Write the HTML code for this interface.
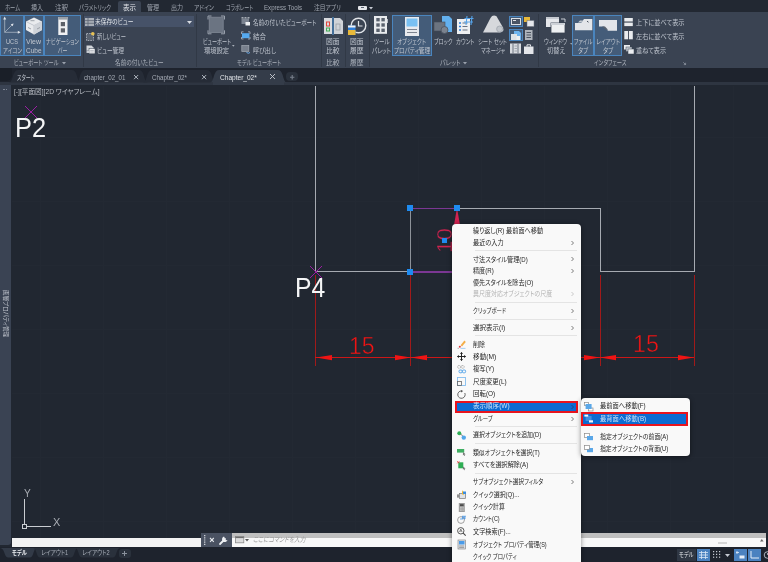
<!DOCTYPE html><html lang="ja"><head><meta charset="utf-8"><title>AutoCAD</title><style>
html,body{margin:0;padding:0;background:#212731;}
body{width:768px;height:562px;overflow:hidden;position:relative;font-family:"Liberation Sans","Noto Sans CJK JP",sans-serif;}
#root{filter:blur(0.4px);position:absolute;left:0;top:0;width:768px;height:562px;overflow:hidden;}
#root div{position:absolute;box-sizing:border-box;}
#root svg{position:absolute;overflow:visible;}
.t{position:absolute;white-space:nowrap;transform-origin:0 50%;line-height:1;font-feature-settings:"palt" 1;}
</style></head><body><div id="root">
<div style="left:0px;top:0px;width:768px;height:12.2px;background:#222832;"></div>
<div style="left:117.8px;top:0.6px;width:23.2px;height:12px;background:#3a4352;border-radius:2px 2px 0 0"></div>
<div style="left:0px;top:11.9px;width:768px;height:56.1px;background:#3a4352;"></div>
<div style="left:0px;top:68px;width:768px;height:15px;background:#1e232d;"></div>
<div style="left:0px;top:81.8px;width:768px;height:3.2px;background:#2e3541;"></div>
<div style="left:0px;top:85px;width:768px;height:462.5px;background:#212731;"></div>
<span class="t" id="t0" style="left:5px;top:3.50px;font-size:7px;color:#a0a6b0;transform:scaleX(0.7488);">ホーム</span>
<span class="t" id="t1" style="left:31px;top:3.50px;font-size:7px;color:#a0a6b0;transform:scaleX(0.8571);">挿入</span>
<span class="t" id="t2" style="left:55px;top:3.50px;font-size:7px;color:#a0a6b0;transform:scaleX(0.9286);">注釈</span>
<span class="t" id="t3" style="left:79px;top:3.50px;font-size:7px;color:#a0a6b0;transform:scaleX(0.7714);">パラメトリック</span>
<span class="t" id="t4" style="left:123px;top:3.50px;font-size:7px;color:#e4e7eb;transform:scaleX(0.9286);">表示</span>
<span class="t" id="t5" style="left:147px;top:3.50px;font-size:7px;color:#a0a6b0;transform:scaleX(0.8571);">管理</span>
<span class="t" id="t6" style="left:171px;top:3.50px;font-size:7px;color:#a0a6b0;transform:scaleX(0.8571);">出力</span>
<span class="t" id="t7" style="left:194px;top:3.50px;font-size:7px;color:#a0a6b0;transform:scaleX(0.8179);">アドイン</span>
<span class="t" id="t8" style="left:226px;top:3.50px;font-size:7px;color:#a0a6b0;transform:scaleX(0.7120);">コラボレート</span>
<span class="t" id="t9" style="left:264px;top:3.50px;font-size:7px;color:#a0a6b0;transform:scaleX(0.8745);">Express Tools</span>
<span class="t" id="t10" style="left:314px;top:3.50px;font-size:7px;color:#a0a6b0;transform:scaleX(0.8256);">注目アプリ</span>
<div style="left:357.5px;top:5.6px;width:9.5px;height:4px;background:#e4e6ea;border-radius:1px"></div>
<div style="left:360.7px;top:7px;width:3px;height:1.3px;background:#5a6270;"></div>
<svg style="left:368.7px;top:6.7px" width="4" height="3" viewBox="0 0 4 3"><path d="M0 0h4l-2 2.5z" fill="#c8ccd4"/></svg>
<div style="left:82.5px;top:14px;width:1px;height:53px;background:#313946;"></div>
<div style="left:196px;top:14px;width:1px;height:53px;background:#313946;"></div>
<div style="left:320.5px;top:14px;width:1px;height:53px;background:#313946;"></div>
<div style="left:345px;top:14px;width:1px;height:53px;background:#313946;"></div>
<div style="left:369px;top:14px;width:1px;height:53px;background:#313946;"></div>
<div style="left:538px;top:14px;width:1px;height:53px;background:#313946;"></div>
<div style="left:0px;top:15px;width:23.5px;height:40.5px;background:#445c79;border:1px solid #4a85be"></div>
<div style="left:24px;top:15px;width:19.5px;height:40.5px;background:#445c79;border:1px solid #4a85be"></div>
<div style="left:44px;top:15px;width:36.5px;height:40.5px;background:#445c79;border:1px solid #4a85be"></div>
<svg style="left:0px;top:14px" width="24" height="22" viewBox="0 0 24 22"><path d="M4.7 18.3V4M4.7 18.3H19.5M4.7 18.3L12.3 10.7" stroke="#aab5c3" stroke-width="0.8" fill="none"/><path d="M4.7 2.6l-1.5 2.8h3zM20.6 18.3l-2.8-1.5v3zM13.6 9.4l-2.9 0.9 2 2z" fill="#dfe4ea"/></svg>
<svg style="left:25px;top:17px" width="18" height="18" viewBox="0 0 18 18"><path d="M9 0.5L17 4.5V13L9 17.5L1 13V4.5z" fill="#e9ebee"/><path d="M1 4.5L9 8.5L17 4.5M9 8.5V17.5" stroke="#b9bec6" stroke-width="0.8" fill="none"/><path d="M9 8.5L17 4.5V13L9 17.5z" fill="#cfd3d9"/><path d="M5.5 3.7h4M3 10.5l3 1.5M12 12l3-1.5" stroke="#8a9099" stroke-width="0.8"/></svg>
<svg style="left:58.3px;top:16.8px" width="10" height="19" viewBox="0 0 10 19"><rect x="0.3" y="0" width="9.2" height="18" fill="#f0f1f3"/><rect x="0.3" y="0" width="9.2" height="2.6" fill="#9aa0a8"/><rect x="2.8" y="5" width="4.2" height="4.2" fill="#5c6169"/><rect x="2.8" y="11.3" width="4.2" height="4.2" fill="#5c6169"/></svg>
<span class="t" id="t11" style="left:6px;top:37.50px;font-size:7px;color:#bfc5ce;transform:scaleX(0.8118);">UCS</span>
<span class="t" id="t12" style="left:2.5px;top:46.50px;font-size:7px;color:#bfc5ce;transform:scaleX(0.7539);">アイコン</span>
<span class="t" id="t13" style="left:26px;top:37.50px;font-size:7px;color:#bfc5ce;transform:scaleX(0.9969);">View</span>
<span class="t" id="t14" style="left:26px;top:46.50px;font-size:7px;color:#bfc5ce;transform:scaleX(0.9262);">Cube</span>
<span class="t" id="t15" style="left:46px;top:37.50px;font-size:7px;color:#bfc5ce;transform:scaleX(0.7408);">ナビゲーション</span>
<span class="t" id="t16" style="left:57.5px;top:46.50px;font-size:7px;color:#bfc5ce;transform:scaleX(0.7029);">バー</span>
<span class="t" id="t17" style="left:14px;top:59.40px;font-size:7px;color:#aab0ba;transform:scaleX(0.7405);">ビューポート ツール</span>
<svg style="left:62px;top:62px" width="4" height="2.5" viewBox="0 0 4 2.5"><path d="M0 0h4l-2 2.5z" fill="#9aa1ac"/></svg>
<div style="left:84px;top:16px;width:109.5px;height:11.3px;background:#465268;"></div>
<svg style="left:85px;top:18px" width="9" height="8" viewBox="0 0 9 8"><rect x="0" y="0" width="9" height="8" fill="#a9afb8"/><path d="M0 2.6h9M0 5.3h9M3 0v8" stroke="#5c6573" stroke-width="0.8"/></svg>
<span class="t" id="t18" style="left:94.5px;top:18.10px;font-size:7px;color:#dfe3e8;transform:scaleX(0.8194);">未保存のビュー</span>
<svg style="left:187px;top:21px" width="5" height="3" viewBox="0 0 5 3"><path d="M0 0h5l-2.5 3z" fill="#d8dce2"/></svg>
<svg style="left:85.5px;top:31px" width="9" height="10" viewBox="0 0 9 10"><rect x="0.5" y="2.5" width="7" height="7" fill="#59626f" stroke="#aab0ba" stroke-width="0.9" stroke-dasharray="1.6 1"/><circle cx="6.8" cy="2.8" r="1.8" fill="#e8c255"/></svg>
<span class="t" id="t19" style="left:97px;top:32.60px;font-size:7px;color:#bfc5ce;transform:scaleX(0.7481);">新しいビュー</span>
<svg style="left:85.5px;top:45px" width="9" height="10" viewBox="0 0 9 10"><path d="M0.5 0.5h5l2 2v3h-7z" fill="#d2d6db"/><rect x="3" y="3.6" width="6" height="5.2" fill="#eef0f2" stroke="#3a4352" stroke-width="0.5"/><path d="M0.5 5.5h2.5v2.5h-2.5z" fill="#c5c9cf"/><path d="M4.2 5.5h3.6M4.2 7h3.6" stroke="#9aa0a9" stroke-width="0.6"/></svg>
<span class="t" id="t20" style="left:97px;top:46.50px;font-size:7px;color:#bfc5ce;transform:scaleX(0.8124);">ビュー管理</span>
<span class="t" id="t21" style="left:115px;top:59.40px;font-size:7px;color:#aab0ba;transform:scaleX(0.8048);">名前の付いたビュー</span>
<svg style="left:208px;top:16px" width="16.5" height="18" viewBox="0 0 16.5 18"><rect x="1.2" y="1.2" width="14" height="15.4" fill="#6b7482" stroke="#7f8794" stroke-width="0.8"/><path d="M0 3.5V0h3.5M13 0h3.5v3.5M16.5 14.3v3.5H13M3.5 17.8H0v-3.5" stroke="#9aa2ae" stroke-width="1" fill="none"/></svg>
<span class="t" id="t22" style="left:203px;top:37.50px;font-size:7px;color:#bfc5ce;transform:scaleX(0.7317);">ビューポート</span>
<span class="t" id="t23" style="left:204px;top:46.50px;font-size:7px;color:#bfc5ce;transform:scaleX(0.8929);">環境設定</span>
<svg style="left:232px;top:45px" width="2.6" height="1.8" viewBox="0 0 2.6 1.8"><path d="M0 0h2.6l-1.3 1.8z" fill="#aab0ba"/></svg>
<svg style="left:240.5px;top:17px" width="10" height="10" viewBox="0 0 10 10"><rect x="0.5" y="1.5" width="7.5" height="5.5" fill="#7b8390"/><path d="M0.5 0.8h8" stroke="#d5d9de" stroke-width="1" stroke-dasharray="2 1"/><rect x="4.5" y="5" width="4.5" height="3.5" fill="#eef0f2"/></svg>
<span class="t" id="t24" style="left:253px;top:18.60px;font-size:7px;color:#bfc5ce;transform:scaleX(0.8008);">名前の付いたビューポート</span>
<svg style="left:240.5px;top:31px" width="10" height="10" viewBox="0 0 10 10"><rect x="1" y="2.2" width="7.5" height="5" fill="#56a9ee"/><path d="M0.5 3V0.8h2M7 0.8h2V3M9 6v2H7M2.5 8H0.5V6" stroke="#aeb5bf" stroke-width="0.8" fill="none"/></svg>
<span class="t" id="t25" style="left:253px;top:32.60px;font-size:7px;color:#bfc5ce;transform:scaleX(0.9286);">結合</span>
<svg style="left:240.5px;top:45px" width="10" height="10" viewBox="0 0 10 10"><rect x="0.8" y="0.5" width="7" height="6" fill="#78808d" stroke="#a3aab4" stroke-width="0.7"/><path d="M5.5 7.5q2 1.5 3.5 0" stroke="#6fb0ee" stroke-width="1" fill="none"/></svg>
<span class="t" id="t26" style="left:253px;top:46.50px;font-size:7px;color:#bfc5ce;transform:scaleX(0.8623);">呼び出し</span>
<span class="t" id="t27" style="left:237px;top:59.40px;font-size:7px;color:#aab0ba;transform:scaleX(0.7337);">モデル ビューポート</span>
<svg style="left:324px;top:17px" width="19" height="18" viewBox="0 0 19 18"><path d="M0 1h8v16H0z" fill="#d9dbdf"/><path d="M10 1h6l3 3v13h-9z" fill="#d0d3d8"/><path d="M9 0v18" stroke="#4f9be0" stroke-width="1"/><rect x="2.5" y="5" width="3" height="4" fill="none" stroke="#e0453a" stroke-width="1"/><rect x="2.5" y="11" width="3" height="3" fill="none" stroke="#3fae52" stroke-width="1"/><rect x="12" y="7" width="4" height="6" fill="none" stroke="#9aa0a8" stroke-width="0.8"/></svg>
<span class="t" id="t28" style="left:326px;top:37.50px;font-size:7px;color:#bfc5ce;transform:scaleX(0.9643);">図面</span>
<span class="t" id="t29" style="left:326px;top:46.50px;font-size:7px;color:#bfc5ce;transform:scaleX(0.9643);">比較</span>
<span class="t" id="t30" style="left:326px;top:59.40px;font-size:7px;color:#aab0ba;transform:scaleX(0.9643);">比較</span>
<svg style="left:348px;top:16.5px" width="19" height="19" viewBox="0 0 19 19"><circle cx="10.5" cy="8.5" r="7.3" fill="none" stroke="#e1e4e8" stroke-width="1.4"/><path d="M10.5 4v5h4" stroke="#e1e4e8" stroke-width="1.2" fill="none"/><rect x="0" y="8.5" width="7.5" height="9.5" fill="#2f7ed8"/><rect x="0" y="13" width="7.5" height="5" fill="#e9b93a"/><rect x="0" y="8.5" width="7.5" height="2" fill="#f0f2f4"/></svg>
<span class="t" id="t31" style="left:350px;top:37.50px;font-size:7px;color:#bfc5ce;transform:scaleX(0.9643);">図面</span>
<span class="t" id="t32" style="left:350px;top:46.50px;font-size:7px;color:#bfc5ce;transform:scaleX(0.9643);">履歴</span>
<span class="t" id="t33" style="left:350px;top:59.40px;font-size:7px;color:#aab0ba;transform:scaleX(0.9643);">履歴</span>
<svg style="left:374px;top:16px" width="14" height="18" viewBox="0 0 14 18"><rect x="0" y="0" width="13" height="17.8" fill="#e9ebee"/><rect x="13" y="3" width="1" height="4" fill="#b9bec6"/><g fill="#5a626e"><rect x="2.3" y="2" width="3.4" height="3.4"/><rect x="7.4" y="2" width="3.4" height="3.4"/><rect x="2.3" y="7.3" width="3.4" height="3.4"/><rect x="7.4" y="7.3" width="3.4" height="3.4"/><rect x="2.3" y="12.6" width="3.4" height="3.4"/><rect x="7.4" y="12.6" width="3.4" height="3.4"/></g></svg>
<span class="t" id="t34" style="left:374px;top:37.50px;font-size:7px;color:#bfc5ce;transform:scaleX(0.7793);">ツール</span>
<span class="t" id="t35" style="left:372px;top:46.50px;font-size:7px;color:#bfc5ce;transform:scaleX(0.8026);">パレット</span>
<div style="left:392px;top:14.5px;width:39.5px;height:41px;background:#445c79;border:1px solid #4a85be"></div>
<svg style="left:405px;top:16.5px" width="14" height="19" viewBox="0 0 14 19"><rect x="0" y="0" width="14" height="19" fill="#e8eaee"/><rect x="1.5" y="1.5" width="11" height="8" fill="#79c0f2"/><path d="M2 12.5h10M2 15.5h10" stroke="#7d848f" stroke-width="1"/></svg>
<span class="t" id="t36" style="left:397px;top:37.50px;font-size:7px;color:#bfc5ce;transform:scaleX(0.7871);">オブジェクト</span>
<span class="t" id="t37" style="left:394px;top:46.50px;font-size:7px;color:#bfc5ce;transform:scaleX(0.7964);">プロパティ管理</span>
<svg style="left:434px;top:16px" width="19" height="19" viewBox="0 0 19 19"><path d="M8 0h7l3 3v13H8z" fill="#63b0ee"/><rect x="0" y="6" width="11" height="9" fill="#6c7480" stroke="#444c58" stroke-width="0.6"/><circle cx="10.5" cy="14" r="3.5" fill="#7b838f" stroke="#4a525e" stroke-width="0.8"/></svg>
<span class="t" id="t38" style="left:434px;top:37.50px;font-size:7px;color:#bfc5ce;transform:scaleX(0.7470);">ブロック</span>
<svg style="left:457px;top:16px" width="18" height="19" viewBox="0 0 18 19"><rect x="0" y="3" width="13" height="15" fill="#eef0f2"/><path d="M2 7h2M2 10.5h2M2 14h2" stroke="#2f7ed8" stroke-width="1.5"/><path d="M5.5 7h5M5.5 10.5h5M5.5 14h5" stroke="#6b7380" stroke-width="1.2"/><path d="M10 0l-1 9M15 0l-1 9M7.5 2.5h9M7 6h9" stroke="#56a4ea" stroke-width="1.1"/></svg>
<span class="t" id="t39" style="left:456px;top:37.50px;font-size:7px;color:#bfc5ce;transform:scaleX(0.7580);">カウント</span>
<svg style="left:483.3px;top:15.3px" width="21" height="18" viewBox="0 0 21 18"><path d="M0 17.5L7.5 3Q9.5 -0.6 13.5 1.2L20 12.5Q21.5 17 17 17.5z" fill="#d6d8dc"/><circle cx="16.6" cy="14" r="3" fill="#c2c6cc" stroke="#9aa0a9" stroke-width="0.7"/></svg>
<span class="t" id="t40" style="left:478px;top:37.50px;font-size:7px;color:#bfc5ce;transform:scaleX(0.7576);">シート セット</span>
<span class="t" id="t41" style="left:481px;top:46.50px;font-size:7px;color:#bfc5ce;transform:scaleX(0.7511);">マネージャ</span>
<div style="left:509px;top:15.5px;width:13.5px;height:11.5px;background:#445c79;border:1px solid #4a85be"></div>
<div style="left:511px;top:18px;width:9.5px;height:6.5px;background:#4a5464;border:0.8px solid #dfe2e6"></div>
<div style="left:512.5px;top:20.2px;width:3px;height:0.8px;background:#dfe2e6;"></div>
<div style="left:509px;top:29px;width:13.5px;height:12px;background:#445c79;border:1px solid #4a85be"></div>
<svg style="left:511px;top:31px" width="10" height="9" viewBox="0 0 10 9"><path d="M3 0h5l2 2v7H3z" fill="#6fb4ee"/><rect x="0" y="3" width="6" height="6" fill="#dfe2e6"/><rect x="5.5" y="5" width="3.5" height="4" fill="#eef0f2"/></svg>
<svg style="left:510px;top:43px" width="12" height="11" viewBox="0 0 12 11"><rect x="0" y="0.5" width="11" height="10" fill="#d9dce1"/><path d="M3 0.5v10M8 0.5v10" stroke="#6a727e" stroke-width="1"/><path d="M4.5 3h2.5M4.5 5.5h2.5M4.5 8h2.5" stroke="#8a919c" stroke-width="0.7"/></svg>
<svg style="left:524px;top:16.5px" width="10" height="10" viewBox="0 0 10 10"><rect x="0" y="0" width="6" height="5" fill="#e9b93a"/><rect x="3" y="3.5" width="7" height="6" fill="#e6e8ec" stroke="#6a727e" stroke-width="0.5"/></svg>
<svg style="left:525px;top:30px" width="8" height="10" viewBox="0 0 8 10"><rect x="0" y="0" width="7.5" height="10" fill="#aeb4bc"/><path d="M1.5 2.5h4.5M1.5 5h4.5M1.5 7.5h4.5" stroke="#4f5763" stroke-width="1"/></svg>
<svg style="left:524px;top:44px" width="10" height="10" viewBox="0 0 10 10"><rect x="0" y="2.5" width="9.5" height="7.5" fill="#e4e6ea"/><path d="M3 2.5V0.8h3.5v1.7" stroke="#e4e6ea" stroke-width="1" fill="none"/></svg>
<span class="t" id="t42" style="left:440px;top:59.40px;font-size:7px;color:#aab0ba;transform:scaleX(0.8660);">パレット</span>
<svg style="left:462.8px;top:62px" width="4" height="2.5" viewBox="0 0 4 2.5"><path d="M0 0h4l-2 2.5z" fill="#9aa1ac"/></svg>
<svg style="left:546px;top:17px" width="20" height="17" viewBox="0 0 20 17"><rect x="0" y="0" width="13" height="10" fill="#e6e8ec"/><rect x="0" y="0" width="13" height="2" fill="#c6cad1"/><rect x="5" y="6" width="14" height="10" fill="#eef0f2" stroke="#3a4352" stroke-width="0.8"/><rect x="5" y="6" width="14" height="2" fill="#cdd1d7"/><path d="M15 2h4v3" stroke="#d8dce2" stroke-width="0.9" fill="none"/></svg>
<span class="t" id="t43" style="left:544px;top:37.50px;font-size:7px;color:#bfc5ce;transform:scaleX(0.7723);">ウィンドウ</span>
<span class="t" id="t44" style="left:547px;top:46.50px;font-size:7px;color:#bfc5ce;transform:scaleX(0.8848);">切替え</span>
<svg style="left:569.5px;top:43px" width="2.6" height="1.8" viewBox="0 0 2.6 1.8"><path d="M0 0h2.6l-1.3 1.8z" fill="#9aa1ac"/></svg>
<div style="left:572px;top:14.5px;width:21.5px;height:41px;background:#445c79;border:1px solid #4a85be"></div>
<div style="left:594px;top:14.5px;width:27.5px;height:41px;background:#445c79;border:1px solid #4a85be"></div>
<svg style="left:574.5px;top:19px" width="18" height="12" viewBox="0 0 18 12"><path d="M0 4L6 4L9 0H17.3V11.3H0z" fill="#e3e5e9"/><path d="M3 3.6l2-2h3l-2 2z" fill="#c9cdd3"/><path d="M12 2.2l1.5 1" stroke="#4b535f" stroke-width="1"/></svg>
<svg style="left:599px;top:19.5px" width="18" height="12" viewBox="0 0 18 12"><path d="M0 0h18v10.8H9L5 6.5H0z" fill="#e3e5e9"/><path d="M3 6.5h3l3 3.3H7z" fill="#59616d"/></svg>
<span class="t" id="t45" style="left:573.5px;top:37.50px;font-size:7px;color:#bfc5ce;transform:scaleX(0.7629);">ファイル</span>
<span class="t" id="t46" style="left:578px;top:46.50px;font-size:7px;color:#bfc5ce;transform:scaleX(0.8163);">タブ</span>
<span class="t" id="t47" style="left:596px;top:37.50px;font-size:7px;color:#bfc5ce;transform:scaleX(0.7853);">レイアウト</span>
<span class="t" id="t48" style="left:603px;top:46.50px;font-size:7px;color:#bfc5ce;transform:scaleX(0.8163);">タブ</span>
<svg style="left:624px;top:17.5px" width="10" height="9" viewBox="0 0 10 9"><rect x="0.3" y="0" width="8.5" height="3.5" fill="#e9ebee"/><rect x="0.3" y="4.6" width="8.5" height="3.5" fill="#e9ebee"/></svg>
<span class="t" id="t49" style="left:636px;top:18.60px;font-size:7px;color:#bfc5ce;transform:scaleX(0.8811);">上下に並べて表示</span>
<svg style="left:624px;top:31px" width="10" height="9" viewBox="0 0 10 9"><rect x="0.3" y="0" width="3.8" height="8.3" fill="#e9ebee"/><rect x="5" y="0" width="3.8" height="8.3" fill="#e9ebee"/></svg>
<span class="t" id="t50" style="left:636px;top:32.60px;font-size:7px;color:#bfc5ce;transform:scaleX(0.8811);">左右に並べて表示</span>
<svg style="left:624px;top:45px" width="10" height="9" viewBox="0 0 10 9"><rect x="0" y="0" width="6" height="4.5" fill="#eceef1"/><rect x="2" y="2" width="6" height="4.5" fill="#c9cdd4" stroke="#3a4352" stroke-width="0.5"/><rect x="4" y="4" width="6" height="5" fill="#eceef1" stroke="#3a4352" stroke-width="0.5"/></svg>
<span class="t" id="t51" style="left:636px;top:46.50px;font-size:7px;color:#bfc5ce;transform:scaleX(0.8700);">重ねて表示</span>
<span class="t" id="t52" style="left:594px;top:59.40px;font-size:7px;color:#aab0ba;transform:scaleX(0.7572);">インタフェース</span>
<svg style="left:683.3px;top:61.7px" width="3" height="3" viewBox="0 0 3 3"><path d="M0.3 0.3L2.6 2.6M2.6 0.8v1.8H0.8" stroke="#9aa1ac" stroke-width="0.7" fill="none"/></svg>
<div style="left:0px;top:68px;width:11.5px;height:13px;background:#1a1f28;border-radius:0 0 6px 0"></div>
<svg style="left:9px;top:69.9px" width="72" height="12.5" viewBox="0 0 72 12.5"><path d="M0 12.5C4.5 12.5 3 0 9 0H63C69 0 67.5 12.5 72 12.5z" fill="#262c37"/></svg>
<svg style="left:76px;top:69.9px" width="72" height="12.5" viewBox="0 0 72 12.5"><path d="M0 12.5C4.5 12.5 3 0 9 0H63C69 0 67.5 12.5 72 12.5z" fill="#262c37"/></svg>
<svg style="left:143px;top:69.9px" width="73" height="12.5" viewBox="0 0 73 12.5"><path d="M0 12.5C4.5 12.5 3 0 9 0H64C70 0 68.5 12.5 73 12.5z" fill="#262c37"/></svg>
<svg style="left:210px;top:69.9px" width="77" height="12.5" viewBox="0 0 77 12.5"><path d="M0 12.5C4.5 12.5 3 0 9 0H68C74 0 72.5 12.5 77 12.5z" fill="#343c49"/></svg>
<div style="left:213px;top:82px;width:71px;height:3px;background:#343c49;"></div>
<span class="t" id="t53" style="left:17px;top:73.50px;font-size:7px;color:#bcc2cb;transform:scaleX(0.7084);">スタート</span>
<span class="t" id="t54" style="left:84px;top:73.50px;font-size:7px;color:#a6acb6;transform:scaleX(0.8883);">chapter_02_01</span>
<span class="t" id="t55" style="left:152px;top:73.50px;font-size:7px;color:#a6acb6;transform:scaleX(0.8903);">Chapter_02*</span>
<span class="t" id="t56" style="left:219.5px;top:73.50px;font-size:7px;color:#e2e5e9;transform:scaleX(0.9361);">Chapter_02*</span>
<svg style="left:134.4px;top:74.5px" width="4.2" height="4.2" viewBox="0 0 4.2 4.2"><path d="M0 0L4.2 4.2M4.2 0L0 4.2" stroke="#b9bfc8" stroke-width="0.9"/></svg>
<svg style="left:202.4px;top:74.5px" width="4.2" height="4.2" viewBox="0 0 4.2 4.2"><path d="M0 0L4.2 4.2M4.2 0L0 4.2" stroke="#b9bfc8" stroke-width="0.9"/></svg>
<svg style="left:270.1px;top:74.0px" width="5.0" height="5.0" viewBox="0 0 5.0 5.0"><path d="M0 0L5.0 5.0M5.0 0L0 5.0" stroke="#c8ccd3" stroke-width="0.9"/></svg>
<div style="left:286px;top:72.3px;width:11.5px;height:9px;background:#2a313c;border-radius:4px"></div>
<svg style="left:289.6px;top:74.6px" width="4.4" height="4.4" viewBox="0 0 4.4 4.4"><path d="M2.2 0v4.4M0 2.2h4.4" stroke="#7a818d" stroke-width="1.1"/></svg>
<div style="left:39.5px;top:85.5px;width:1px;height:452px;background:#232933;"></div>
<div style="left:102.5px;top:85.5px;width:1px;height:452px;background:#232933;"></div>
<div style="left:165.5px;top:85.5px;width:1px;height:452px;background:#232933;"></div>
<div style="left:228.5px;top:85.5px;width:1px;height:452px;background:#232933;"></div>
<div style="left:291.5px;top:85.5px;width:1px;height:452px;background:#232933;"></div>
<div style="left:354.5px;top:85.5px;width:1px;height:452px;background:#232933;"></div>
<div style="left:418px;top:85.5px;width:1px;height:452px;background:#232933;"></div>
<div style="left:481px;top:85.5px;width:1px;height:452px;background:#232933;"></div>
<div style="left:544px;top:85.5px;width:1px;height:452px;background:#232933;"></div>
<div style="left:607px;top:85.5px;width:1px;height:452px;background:#232933;"></div>
<div style="left:670px;top:85.5px;width:1px;height:452px;background:#232933;"></div>
<div style="left:733px;top:85.5px;width:1px;height:452px;background:#232933;"></div>
<div style="left:12px;top:137px;width:756px;height:1px;background:#232933;"></div>
<div style="left:12px;top:201px;width:756px;height:1px;background:#232933;"></div>
<div style="left:12px;top:265px;width:756px;height:1px;background:#232933;"></div>
<div style="left:12px;top:329px;width:756px;height:1px;background:#232933;"></div>
<div style="left:12px;top:393px;width:756px;height:1px;background:#232933;"></div>
<div style="left:12px;top:457px;width:756px;height:1px;background:#232933;"></div>
<div style="left:12px;top:521px;width:756px;height:1px;background:#232933;"></div>
<div style="left:0px;top:85px;width:11.3px;height:460px;background:#3a4353;border-radius:0 0 3px 0"></div>
<div style="left:3px;top:88.5px;width:1.5px;height:1px;background:#7e8694;"></div>
<div style="left:5.5px;top:88.5px;width:1.5px;height:1px;background:#7e8694;"></div>
<span class="t" style="left:8.6px;top:290px;font-size:6px;color:#c0c5cd;transform-origin:0 0;transform:rotate(90deg) scaleX(0.93);line-height:1;" >画層プロパティ管理</span>
<span class="t" id="t57" style="left:13.5px;top:88.90px;font-size:6.6px;color:#bbbfc6;transform:scaleX(1.0094);">[-][平面図][2D ワイヤフレーム]</span>
<div style="left:315px;top:85.5px;width:1px;height:186.5px;background:#a6aab1;"></div>
<div style="left:315px;top:271.2px;width:96px;height:1.2px;background:#a6aab1;"></div>
<div style="left:410px;top:208px;width:1px;height:64px;background:#8d9299;"></div>
<div style="left:457px;top:207.6px;width:143px;height:1.2px;background:#a6aab1;"></div>
<div style="left:599.5px;top:208px;width:1px;height:64px;background:#a6aab1;"></div>
<div style="left:599.5px;top:271.2px;width:95px;height:1.2px;background:#a6aab1;"></div>
<div style="left:693.8px;top:85.5px;width:1px;height:186.5px;background:#a6aab1;"></div>
<div style="left:410px;top:207.5px;width:47px;height:1.4px;background:#7b3793;"></div>
<div style="left:410px;top:271.2px;width:50px;height:1.4px;background:#7b3793;"></div>
<div style="left:315px;top:275px;width:1px;height:91px;background:#a01a1a;"></div>
<div style="left:409.8px;top:275px;width:1px;height:91px;background:#a01a1a;"></div>
<div style="left:599.5px;top:275px;width:1px;height:90.5px;background:#a01a1a;"></div>
<div style="left:694px;top:275px;width:1px;height:90.5px;background:#a01a1a;"></div>
<div style="left:315px;top:357.2px;width:96px;height:1px;background:#cc1717;"></div>
<div style="left:411px;top:357.2px;width:45px;height:1px;background:#cc1717;"></div>
<div style="left:581px;top:357px;width:113px;height:1px;background:#cc1717;"></div>
<svg style="left:315.5px;top:355.09999999999997px" width="16" height="5.2" viewBox="0 0 16 5.2"><path d="M0 2.6L16 0V5.2z" fill="#f01414"/></svg>
<svg style="left:394.5px;top:355.09999999999997px" width="16" height="5.2" viewBox="0 0 16 5.2"><path d="M16 2.6L0 0V5.2z" fill="#f01414"/></svg>
<svg style="left:411px;top:355.09999999999997px" width="16" height="5.2" viewBox="0 0 16 5.2"><path d="M0 2.6L16 0V5.2z" fill="#f01414"/></svg>
<svg style="left:583.5px;top:354.9px" width="16" height="5.2" viewBox="0 0 16 5.2"><path d="M16 2.6L0 0V5.2z" fill="#f01414"/></svg>
<svg style="left:600px;top:354.9px" width="16" height="5.2" viewBox="0 0 16 5.2"><path d="M0 2.6L16 0V5.2z" fill="#f01414"/></svg>
<svg style="left:678px;top:354.9px" width="16" height="5.2" viewBox="0 0 16 5.2"><path d="M16 2.6L0 0V5.2z" fill="#f01414"/></svg>
<span class="t" id="t58" style="left:348.6px;top:334.85px;font-size:23.5px;color:#f01414;transform:scaleX(0.9793);-webkit-text-stroke:0.45px #212731;">15</span>
<span class="t" id="t59" style="left:633px;top:333.25px;font-size:23.5px;color:#f01414;transform:scaleX(0.9908);-webkit-text-stroke:0.45px #212731;">15</span>
<svg style="left:453.5px;top:208px" width="6" height="17" viewBox="0 0 6 17"><path d="M3 0L6 17H0z" fill="#cf2350"/></svg>
<div style="left:456.5px;top:224px;width:1px;height:40px;background:#cf2350;"></div>
<span class="t" style="left:434.3px;top:252.8px;font-size:22.3px;color:#cf2350;-webkit-text-stroke:0.45px #212731;transform-origin:0 0;transform:rotate(-90deg);line-height:1;">10</span>
<div style="left:407.3px;top:205.0px;width:6px;height:6px;background:#1e8bf0;"></div>
<div style="left:454.0px;top:205.0px;width:6px;height:6px;background:#1e8bf0;"></div>
<div style="left:407.3px;top:268.7px;width:6px;height:6px;background:#1e8bf0;"></div>
<div style="left:442.0px;top:237.5px;width:5px;height:5px;background:#1e8bf0;"></div>
<svg style="left:25px;top:105.5px" width="12" height="12" viewBox="0 0 12 12"><path d="M0 0L12 12M12 0L0 12" stroke="#9a1ea2" stroke-width="1"/></svg>
<svg style="left:309.5px;top:265.5px" width="12" height="12" viewBox="0 0 12 12"><path d="M0 0L12 12M12 0L0 12" stroke="#9a1ea2" stroke-width="1"/></svg>
<span class="t" id="t60" style="left:15.2px;top:114.40px;font-size:28px;color:#f4f5f6;transform:scaleX(0.9080);">P2</span>
<span class="t" id="t61" style="left:295px;top:273.80px;font-size:28px;color:#f4f5f6;transform:scaleX(0.8818);">P4</span>
<div style="left:23.5px;top:499px;width:1px;height:25px;background:#c9ccd1;"></div>
<div style="left:26.5px;top:526.2px;width:24.5px;height:1px;background:#c9ccd1;"></div>
<div style="left:21.5px;top:524px;width:5px;height:5px;background:transparent;border:1px solid #c9ccd1"></div>
<span class="t" id="t62" style="left:24.2px;top:487.55px;font-size:10.5px;color:#a9adb4;transform:scaleX(0.9693);">Y</span>
<span class="t" id="t63" style="left:52.7px;top:517.35px;font-size:10.5px;color:#a9adb4;transform:scaleX(1.0405);">X</span>
<div style="left:12px;top:537.8px;width:754.2px;height:9.5px;background:#f3f3f3;"></div>
<div style="left:0px;top:547.3px;width:768px;height:14.7px;background:#1e232d;"></div>
<div style="left:201.3px;top:532.8px;width:31px;height:14.5px;background:#4a5262;"></div>
<div style="left:232.3px;top:532.8px;width:533.9px;height:5.2px;background:#bfbfbf;"></div>
<div style="left:232.3px;top:537.8px;width:533.9px;height:9.5px;background:#f8f8f8;"></div>
<svg style="left:204.3px;top:535px" width="1.4" height="10" viewBox="0 0 1.4 10"><path d="M0.7 0v10" stroke="#d5d9df" stroke-width="1.3" stroke-dasharray="1.2 1"/></svg>
<svg style="left:209.6px;top:538.1px" width="3.8" height="3.8" viewBox="0 0 3.8 3.8"><path d="M0 0L3.8 3.8M3.8 0L0 3.8" stroke="#e4e7eb" stroke-width="1.1"/></svg>
<svg style="left:219px;top:535px" width="10" height="10" viewBox="0 0 10 10"><path d="M1 9L6 4" stroke="#eef0f3" stroke-width="1.8" stroke-linecap="round"/><path d="M5 1.5a2.8 2.8 0 1 0 3.5 3.5L7 5.2 5.8 4 5.6 2.6z" fill="#eef0f3"/></svg>
<svg style="left:235px;top:536px" width="10" height="7" viewBox="0 0 10 7"><rect x="0.4" y="0.4" width="8.4" height="6.4" fill="#dcdcdc" stroke="#8a8a8a" stroke-width="0.8"/><path d="M0.4 1.4h8.4" stroke="#6e6e6e" stroke-width="1.4"/></svg>
<svg style="left:245px;top:539px" width="4" height="3" viewBox="0 0 4 3"><path d="M0 0h4l-2 2.5z" fill="#555"/></svg>
<span class="t" id="t64" style="left:253px;top:536.10px;font-size:7px;color:#9b9b9b;transform:scaleX(0.8203);font-style:italic;">ここにコマンドを入力</span>
<div style="left:718.3px;top:541.7px;width:9px;height:1.9px;background:#d6d6d6;"></div>
<svg style="left:759.7px;top:539px" width="3.6" height="2.6" viewBox="0 0 3.6 2.6"><path d="M0 2.6h3.6l-1.8-2.6z" fill="#666"/></svg>
<svg style="left:0px;top:548px" width="40" height="10" viewBox="0 0 40 10"><path d="M0 0C5 0 4 9.5 8 9.5H30C34 9.5 33 0 37 0z" fill="#323a47"/></svg>
<svg style="left:33px;top:548px" width="46" height="10" viewBox="0 0 46 10"><path d="M0 0C4 0 3 9.5 7 9.5H38C42 9.5 41 0 45 0z" fill="#2a313c"/></svg>
<svg style="left:75px;top:548px" width="46" height="10" viewBox="0 0 46 10"><path d="M0 0C4 0 3 9.5 7 9.5H38C42 9.5 41 0 45 0z" fill="#2a313c"/></svg>
<span class="t" id="t65" style="left:12.2px;top:549.75px;font-size:6.5px;color:#eef0f3;transform:scaleX(0.7940);font-weight:700;">モデル</span>
<span class="t" id="t66" style="left:40.8px;top:549.75px;font-size:6.5px;color:#a6acb6;transform:scaleX(0.8504);">レイアウト1</span>
<span class="t" id="t67" style="left:81.7px;top:549.75px;font-size:6.5px;color:#a6acb6;transform:scaleX(0.8629);">レイアウト2</span>
<div style="left:118.5px;top:549px;width:12px;height:8.5px;background:#2a313c;border-radius:3px"></div>
<svg style="left:122px;top:551px" width="5" height="5" viewBox="0 0 5 5"><path d="M2.5 0v5M0 2.5h5" stroke="#8a919c" stroke-width="1"/></svg>
<div style="left:676.5px;top:548.5px;width:19px;height:12px;background:#2f3744;"></div>
<span class="t" id="t68" style="left:678.5px;top:552.25px;font-size:6.5px;color:#e4e7eb;transform:scaleX(0.7905);">モデル</span>
<div style="left:696.5px;top:548.5px;width:13px;height:12px;background:#4b82c0;"></div>
<svg style="left:698.5px;top:550.5px" width="9" height="8" viewBox="0 0 9 8"><path d="M0 1.5h9M0 4h9M0 6.5h9M2.5 0v8M6.5 0v8" stroke="#d9e6f5" stroke-width="0.8"/></svg>
<svg style="left:712.5px;top:551px" width="8" height="7" viewBox="0 0 8 7"><g fill="#c5cad2"><rect x="0" y="0" width="1.2" height="1.2"/><rect x="3" y="0" width="1.2" height="1.2"/><rect x="6" y="0" width="1.2" height="1.2"/><rect x="0" y="2.8" width="1.2" height="1.2"/><rect x="3" y="2.8" width="1.2" height="1.2"/><rect x="6" y="2.8" width="1.2" height="1.2"/><rect x="0" y="5.6" width="1.2" height="1.2"/><rect x="3" y="5.6" width="1.2" height="1.2"/><rect x="6" y="5.6" width="1.2" height="1.2"/></g></svg>
<svg style="left:725px;top:553.5px" width="5" height="3" viewBox="0 0 5 3"><path d="M0 0h5l-2.5 3z" fill="#c5cad2"/></svg>
<div style="left:733.5px;top:548.5px;width:13px;height:12px;background:#4b82c0;"></div>
<svg style="left:735.5px;top:550.5px" width="9" height="8" viewBox="0 0 9 8"><path d="M1 0v3M0 1.5h3" stroke="#e6eef8" stroke-width="0.8"/><rect x="3.5" y="4.5" width="5" height="3" fill="#e6eef8"/></svg>
<div style="left:747.5px;top:548.5px;width:13px;height:12px;background:#4b82c0;"></div>
<svg style="left:749.5px;top:550.5px" width="9" height="8" viewBox="0 0 9 8"><path d="M1 0v7h8" stroke="#e6eef8" stroke-width="1" fill="none"/></svg>
<svg style="left:762.5px;top:550.5px" width="8" height="8" viewBox="0 0 8 8"><circle cx="4.5" cy="4" r="3.3" fill="none" stroke="#b9bfc8" stroke-width="0.9"/><path d="M4.5 4V2" stroke="#b9bfc8" stroke-width="0.8"/></svg>
<div style="left:452.3px;top:223.8px;width:128.7px;height:345px;background:#f9f9f9;border-radius:4px;box-shadow:0 1px 5px rgba(0,0,0,.45)"></div>
<span class="t" id="t69" style="left:473.3px;top:228.40px;font-size:6.8px;color:#262626;transform:scaleX(0.9093);">繰り返し(R) 最前面へ移動</span>
<span class="t" id="t70" style="left:473.3px;top:239.90px;font-size:6.8px;color:#262626;transform:scaleX(0.9096);">最近の入力</span>
<svg style="left:571px;top:240.8px" width="3" height="4" viewBox="0 0 3 4"><path d="M0.5 0L2.5 2L0.5 4" stroke="#5a5a5a" stroke-width="0.8" fill="none"/></svg>
<div style="left:474.5px;top:250.2px;width:102.5px;height:0.9px;background:#e4e4e4;"></div>
<span class="t" id="t71" style="left:473.3px;top:256.50px;font-size:6.8px;color:#262626;transform:scaleX(0.8963);">寸法スタイル管理(D)</span>
<svg style="left:571px;top:257.4px" width="3" height="4" viewBox="0 0 3 4"><path d="M0.5 0L2.5 2L0.5 4" stroke="#5a5a5a" stroke-width="0.8" fill="none"/></svg>
<span class="t" id="t72" style="left:473.3px;top:268.40px;font-size:6.8px;color:#262626;transform:scaleX(0.8988);">精度(R)</span>
<svg style="left:571px;top:269.3px" width="3" height="4" viewBox="0 0 3 4"><path d="M0.5 0L2.5 2L0.5 4" stroke="#5a5a5a" stroke-width="0.8" fill="none"/></svg>
<span class="t" id="t73" style="left:473.3px;top:279.60px;font-size:6.8px;color:#262626;transform:scaleX(0.8894);">優先スタイルを除去(O)</span>
<span class="t" id="t74" style="left:473.3px;top:290.80px;font-size:6.8px;color:#b3b3b3;transform:scaleX(0.8809);">異尺度対応オブジェクトの尺度</span>
<svg style="left:571px;top:291.7px" width="3" height="4" viewBox="0 0 3 4"><path d="M0.5 0L2.5 2L0.5 4" stroke="#bdbdbd" stroke-width="0.8" fill="none"/></svg>
<div style="left:474.5px;top:301.6px;width:102.5px;height:0.9px;background:#e4e4e4;"></div>
<span class="t" id="t75" style="left:473.3px;top:307.70px;font-size:6.8px;color:#262626;transform:scaleX(0.7919);">クリップボード</span>
<svg style="left:571px;top:308.6px" width="3" height="4" viewBox="0 0 3 4"><path d="M0.5 0L2.5 2L0.5 4" stroke="#5a5a5a" stroke-width="0.8" fill="none"/></svg>
<div style="left:474.5px;top:318.6px;width:102.5px;height:0.9px;background:#e4e4e4;"></div>
<span class="t" id="t76" style="left:473.3px;top:324.70px;font-size:6.8px;color:#262626;transform:scaleX(0.9581);">選択表示(I)</span>
<svg style="left:571px;top:325.6px" width="3" height="4" viewBox="0 0 3 4"><path d="M0.5 0L2.5 2L0.5 4" stroke="#5a5a5a" stroke-width="0.8" fill="none"/></svg>
<div style="left:474.5px;top:335.40000000000003px;width:102.5px;height:0.9px;background:#e4e4e4;"></div>
<span class="t" id="t77" style="left:473.3px;top:341.70px;font-size:6.8px;color:#262626;transform:scaleX(0.8975);">削除</span>
<span class="t" id="t78" style="left:473.3px;top:353.90px;font-size:6.8px;color:#262626;transform:scaleX(0.9749);">移動(M)</span>
<span class="t" id="t79" style="left:473.3px;top:366.10px;font-size:6.8px;color:#262626;transform:scaleX(0.9357);">複写(Y)</span>
<span class="t" id="t80" style="left:473.3px;top:378.80px;font-size:6.8px;color:#262626;transform:scaleX(0.9493);">尺度変更(L)</span>
<span class="t" id="t81" style="left:473.3px;top:391.30px;font-size:6.8px;color:#262626;transform:scaleX(0.9478);">回転(O)</span>
<div style="left:455.3px;top:400.8px;width:123px;height:12.3px;background:#0b6bd2;border:2.5px solid #e8141e"></div>
<span class="t" id="t82" style="left:473.3px;top:403.40px;font-size:6.8px;color:#cce1f7;transform:scaleX(0.9622);">表示順序(W)</span>
<svg style="left:571px;top:405px" width="3" height="4" viewBox="0 0 3 4"><path d="M0.5 0L2.5 2L0.5 4" stroke="#1d3d70" stroke-width="0.8" fill="none"/></svg>
<span class="t" id="t83" style="left:473.3px;top:415.60px;font-size:6.8px;color:#262626;transform:scaleX(0.7860);">グループ</span>
<svg style="left:571px;top:416.5px" width="3" height="4" viewBox="0 0 3 4"><path d="M0.5 0L2.5 2L0.5 4" stroke="#5a5a5a" stroke-width="0.8" fill="none"/></svg>
<div style="left:474.5px;top:426.1px;width:102.5px;height:0.9px;background:#e4e4e4;"></div>
<span class="t" id="t84" style="left:473.3px;top:432.00px;font-size:6.8px;color:#262626;transform:scaleX(0.8669);">選択オブジェクトを追加(D)</span>
<div style="left:474.5px;top:443.3px;width:102.5px;height:0.9px;background:#e4e4e4;"></div>
<span class="t" id="t85" style="left:473.3px;top:449.60px;font-size:6.8px;color:#262626;transform:scaleX(0.8560);">類似オブジェクトを選択(T)</span>
<span class="t" id="t86" style="left:473.3px;top:462.10px;font-size:6.8px;color:#262626;transform:scaleX(0.9051);">すべてを選択解除(A)</span>
<div style="left:474.5px;top:473.1px;width:102.5px;height:0.9px;background:#e4e4e4;"></div>
<span class="t" id="t87" style="left:473.3px;top:478.80px;font-size:6.8px;color:#262626;transform:scaleX(0.8277);">サブオブジェクト選択フィルタ</span>
<svg style="left:571px;top:479.7px" width="3" height="4" viewBox="0 0 3 4"><path d="M0.5 0L2.5 2L0.5 4" stroke="#5a5a5a" stroke-width="0.8" fill="none"/></svg>
<span class="t" id="t88" style="left:473.3px;top:491.50px;font-size:6.8px;color:#262626;transform:scaleX(0.8779);">クイック選択(Q)...</span>
<span class="t" id="t89" style="left:473.3px;top:504.10px;font-size:6.8px;color:#262626;transform:scaleX(0.8535);">クイック計算</span>
<span class="t" id="t90" style="left:473.3px;top:516.30px;font-size:6.8px;color:#262626;transform:scaleX(0.8060);">カウント(C)</span>
<span class="t" id="t91" style="left:473.3px;top:528.90px;font-size:6.8px;color:#262626;transform:scaleX(0.9078);">文字検索(F)...</span>
<span class="t" id="t92" style="left:473.3px;top:541.60px;font-size:6.8px;color:#262626;transform:scaleX(0.8134);">オブジェクト プロパティ管理(S)</span>
<span class="t" id="t93" style="left:473.3px;top:553.60px;font-size:6.8px;color:#262626;transform:scaleX(0.7841);">クイック プロパティ</span>
<svg style="left:457px;top:340px" width="9" height="9" viewBox="0 0 9 9"><path d="M3.6 5.2L7.4 0.6L8.8 1.9L5 6.4z" fill="#f4ae48"/><circle cx="2.8" cy="6.8" r="1" fill="#e03a3a"/><path d="M0.5 8.3h1.5" stroke="#999" stroke-width="0.7"/><path d="M3.5 8.4h5" stroke="#9ccaf0" stroke-width="0.9"/></svg>
<svg style="left:456.8px;top:352.3px" width="9" height="9" viewBox="0 0 9 9"><path d="M4.5 0.5v8M0.5 4.5h8" stroke="#222" stroke-width="1"/><path d="M4.5 0L3 2h3zM4.5 9L3 7h3zM0 4.5L2 3v3zM9 4.5L7 3v3z" fill="#222"/></svg>
<svg style="left:457px;top:364.5px" width="9" height="9" viewBox="0 0 9 9"><rect x="0.6" y="0.6" width="3" height="2.6" rx="1" fill="none" stroke="#8a8a8a" stroke-width="0.7" stroke-dasharray="1 0.6"/><rect x="4.2" y="0.6" width="3" height="2.6" rx="1" fill="none" stroke="#8a8a8a" stroke-width="0.7" stroke-dasharray="1 0.6"/><rect x="2" y="5" width="3.2" height="2.8" rx="1.1" fill="none" stroke="#58a6ea" stroke-width="1"/><rect x="5.4" y="5" width="3.2" height="2.8" rx="1.1" fill="none" stroke="#58a6ea" stroke-width="1"/></svg>
<svg style="left:457px;top:377px" width="9" height="9" viewBox="0 0 9 9"><rect x="0.5" y="0.5" width="8" height="8" fill="none" stroke="#84bdef" stroke-width="0.9"/><rect x="0.5" y="4.5" width="4" height="4" fill="none" stroke="#666" stroke-width="0.8"/></svg>
<svg style="left:457px;top:389.7px" width="9" height="9" viewBox="0 0 9 9"><path d="M7.8 3A3.7 3.7 0 1 1 4.5 0.9" fill="none" stroke="#555" stroke-width="0.9"/><path d="M4 0l2.2 1L4 2.5z" fill="#555"/></svg>
<svg style="left:457px;top:430.5px" width="9" height="9" viewBox="0 0 9 9"><circle cx="2.3" cy="2.3" r="2" fill="#2fae55"/><circle cx="6.8" cy="6.6" r="2.2" fill="#52a6ea"/><path d="M3.5 3.5q2 0 2 1.5" stroke="#666" stroke-width="0.7" fill="none"/></svg>
<svg style="left:457px;top:448px" width="9" height="9" viewBox="0 0 9 9"><rect x="0" y="1" width="7.2" height="3.6" fill="#3fae62"/><path d="M6 4l2.6 2.2-1.2.2.7 1.4-.7.3-.7-1.4-.8.8z" fill="#777"/></svg>
<svg style="left:457px;top:460.5px" width="9" height="9" viewBox="0 0 9 9"><rect x="1.3" y="1.3" width="5" height="6" fill="#2fae55"/><path d="M0.3 0.3l2 2M2.3 0.3l-2 2" stroke="#e03a3a" stroke-width="0.9"/><path d="M6 5.4l2.6 2.2-1.2.2.7 1.2-.7.3-.7-1.3-.8.8z" fill="#777"/></svg>
<svg style="left:456.5px;top:490px" width="10" height="9" viewBox="0 0 10 9"><rect x="2.5" y="3.5" width="6" height="5" fill="#dfe3e8" stroke="#777" stroke-width="0.7"/><path d="M1 8V4M0 6h2" stroke="#555" stroke-width="0.8"/><path d="M5 0l1 1.7 1.8.2-1.3 1.3.3 1.8L5 4.2z" fill="#f0b429"/><rect x="6" y="1.5" width="3" height="2.5" fill="#3b8de0"/></svg>
<svg style="left:457.5px;top:502.5px" width="8" height="9" viewBox="0 0 8 9"><rect x="0.8" y="0" width="6" height="9" fill="#9b9b9b"/><rect x="2" y="1.2" width="3.6" height="1.8" fill="#4a4a4a"/><path d="M2 4.6h3.6M2 6h3.6M2 7.4h3.6" stroke="#dcdcdc" stroke-width="0.7" stroke-dasharray="0.9 0.45"/></svg>
<svg style="left:457px;top:514.7px" width="9" height="9" viewBox="0 0 9 9"><circle cx="4" cy="5" r="3.4" fill="none" stroke="#8a8a8a" stroke-width="0.8"/><path d="M4 5V3M6 0.5l-.5 4M8 0.5l-.5 4M5 1.7h3.8M4.8 3.2h3.8" stroke="#3b8de0" stroke-width="0.7" fill="none"/></svg>
<svg style="left:457px;top:527.3px" width="9" height="9" viewBox="0 0 9 9"><circle cx="3.8" cy="3.8" r="3.2" fill="none" stroke="#444" stroke-width="0.9"/><path d="M6.2 6.2L8.7 8.7" stroke="#444" stroke-width="1.1"/><path d="M2.5 5l1.3-3 1.3 3M3 4h1.6" stroke="#444" stroke-width="0.6" fill="none"/></svg>
<svg style="left:457.5px;top:539.8px" width="8" height="9" viewBox="0 0 8 9"><rect x="0" y="0" width="7.5" height="9" fill="#e4e7eb" stroke="#777" stroke-width="0.6"/><rect x="1" y="1" width="5.5" height="3.5" fill="#4a9be8"/><path d="M1.2 6h5M1.2 7.6h5" stroke="#777" stroke-width="0.7"/></svg>
<div style="left:580.9px;top:398.4px;width:109.6px;height:57.6px;background:#f9f9f9;border-radius:4px;box-shadow:0 1px 5px rgba(0,0,0,.45)"></div>
<span class="t" id="t94" style="left:600.3px;top:403.40px;font-size:6.8px;color:#262626;transform:scaleX(0.9221);">最前面へ移動(F)</span>
<div style="left:581.3px;top:412px;width:106.7px;height:13.8px;background:#0b6bd2;border:2.6px solid #e8141e"></div>
<span class="t" id="t95" style="left:600.3px;top:415.50px;font-size:6.8px;color:#cce1f7;transform:scaleX(0.9249);">最背面へ移動(B)</span>
<span class="t" id="t96" style="left:600.3px;top:433.50px;font-size:6.8px;color:#262626;transform:scaleX(0.8679);">指定オブジェクトの前面(A)</span>
<span class="t" id="t97" style="left:600.3px;top:445.50px;font-size:6.8px;color:#262626;transform:scaleX(0.8638);">指定オブジェクトの背面(U)</span>
<svg style="left:584px;top:401.5px" width="9.5" height="9.5" viewBox="0 0 9.5 9.5"><rect x="0.4" y="0.4" width="4" height="3" fill="#fff" stroke="#8a8a8a" stroke-width="0.7"/><rect x="4.6" y="6" width="4.4" height="3" fill="#fff" stroke="#8a8a8a" stroke-width="0.7"/><rect x="1.6" y="2" width="6" height="5" fill="#5aa7e8"/></svg>
<svg style="left:584px;top:414.2px" width="9.5" height="9.5" viewBox="0 0 9.5 9.5"><rect x="1.6" y="2" width="6" height="5" fill="#3f8fe0"/><rect x="0.4" y="0.6" width="3.8" height="2" fill="#f4f6f8"/><rect x="5" y="6.3" width="4" height="2.2" fill="#f4f6f8"/></svg>
<svg style="left:584px;top:432.5px" width="9.5" height="9.5" viewBox="0 0 9.5 9.5"><rect x="0.4" y="0.4" width="5" height="4" fill="#fff" stroke="#8a8a8a" stroke-width="0.7"/><rect x="3" y="3" width="6" height="4.2" fill="#5aa7e8"/></svg>
<svg style="left:584px;top:444.5px" width="9.5" height="9.5" viewBox="0 0 9.5 9.5"><rect x="3" y="3" width="6" height="4.2" fill="#5aa7e8"/><rect x="0.4" y="0.4" width="5" height="4" fill="#fff" stroke="#8a8a8a" stroke-width="0.7"/></svg>
</div></body></html>
